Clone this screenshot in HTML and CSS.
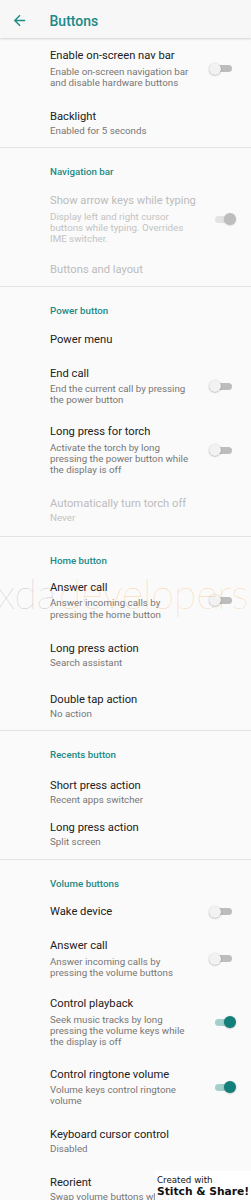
FILE: index.html
```html
<!DOCTYPE html>
<html>
<head>
<meta charset="utf-8">
<link rel="stylesheet" href="styles.css">
</head>
<body>
<div class="screen">
  <header class="bar">
    <svg class="back" viewBox="0 0 24 24"><path d="M20 11H7.83l5.59-5.59L12 4l-8 8 8 8 1.41-1.41L7.83 13H20v-2z"/></svg>
    <h1 class="bar-title">Buttons</h1>
  </header>
  <main class="list">
    <div class="pref sw pb11">
      <div class="text"><div class="title">Enable on-screen nav bar</div><div class="sum">Enable on-screen navigation bar<br>and disable hardware buttons</div></div>
      <span class="switch"><span class="track"></span><span class="thumb"></span></span>
    </div>
    <div class="pref">
      <div class="text"><div class="title">Backlight</div><div class="sum">Enabled for 5 seconds</div></div>
    </div>
    <div class="divider"></div>

    <div class="cat pb6">Navigation bar</div>
    <div class="pref sw disabled pb8">
      <div class="text"><div class="title">Show arrow keys while typing</div><div class="sum">Display left and right cursor<br>buttons while typing. Overrides<br>IME switcher.</div></div>
      <span class="switch on"><span class="track"></span><span class="thumb"></span></span>
    </div>
    <div class="pref only disabled pb10">
      <div class="text"><div class="title">Buttons and layout</div></div>
    </div>
    <div class="divider"></div>

    <div class="cat">Power button</div>
    <div class="pref only">
      <div class="text"><div class="title">Power menu</div></div>
    </div>
    <div class="pref sw pb8h">
      <div class="text"><div class="title">End call</div><div class="sum">End the current call by pressing<br>the power button</div></div>
      <span class="switch"><span class="track"></span><span class="thumb"></span></span>
    </div>
    <div class="pref sw pb11">
      <div class="text"><div class="title">Long press for torch</div><div class="sum">Activate the torch by long<br>pressing the power button while<br>the display is off</div></div>
      <span class="switch"><span class="track"></span><span class="thumb"></span></span>
    </div>
    <div class="pref disabled pb12">
      <div class="text"><div class="title">Automatically turn torch off</div><div class="sum">Never</div></div>
    </div>
    <div class="divider"></div>

    <div class="cat pb4">Home button</div>
    <div class="pref sw pb11h">
      <div class="text"><div class="title">Answer call</div><div class="sum">Answer incoming calls by<br>pressing the home button</div></div>
      <span class="switch"><span class="track"></span><span class="thumb"></span></span>
    </div>
    <div class="pref pb13h">
      <div class="text"><div class="title">Long press action</div><div class="sum">Search assistant</div></div>
    </div>
    <div class="pref">
      <div class="text"><div class="title">Double tap action</div><div class="sum">No action</div></div>
    </div>
    <div class="divider"></div>

    <div class="cat pb8">Recents button</div>
    <div class="pref pb5">
      <div class="text"><div class="title">Short press action</div><div class="sum">Recent apps switcher</div></div>
    </div>
    <div class="pref pb11h">
      <div class="text"><div class="title">Long press action</div><div class="sum">Split screen</div></div>
    </div>
    <div class="divider"></div>

    <div class="cat pb4h">Volume buttons</div>
    <div class="pref only">
      <div class="text"><div class="title">Wake device</div></div>
      <span class="switch"><span class="track"></span><span class="thumb"></span></span>
    </div>
    <div class="pref sw pb8">
      <div class="text"><div class="title">Answer call</div><div class="sum">Answer incoming calls by<br>pressing the volume buttons</div></div>
      <span class="switch"><span class="track"></span><span class="thumb"></span></span>
    </div>
    <div class="pref sw pb9">
      <div class="text"><div class="title">Control playback</div><div class="sum">Seek music tracks by long<br>pressing the volume keys while<br>the display is off</div></div>
      <span class="switch on"><span class="track"></span><span class="thumb"></span></span>
    </div>
    <div class="pref sw">
      <div class="text"><div class="title">Control ringtone volume</div><div class="sum">Volume keys control ringtone<br>volume</div></div>
      <span class="switch on"><span class="track"></span><span class="thumb"></span></span>
    </div>
    <div class="pref">
      <div class="text"><div class="title">Keyboard cursor control</div><div class="sum">Disabled</div></div>
    </div>
    <div class="pref">
      <div class="text"><div class="title">Reorient</div><div class="sum">Swap volume buttons when the<br>screen is rotated</div></div>
    </div>
  </main>

  <div class="xda"><span class="xda-x">xda</span><span class="xda-dev">developers</span></div>

  <div class="stitch">
    <div class="stitch-small">Created with</div>
    <div class="stitch-big">Stitch &amp; Share!</div>
  </div>
</div>
</body>
</html>
```
FILE: styles.css
```css
html, body {
  margin: 0;
  padding: 0;
  background: #fafafa;
}

.screen {
  position: relative;
  width: 251px;
  height: 1200px;
  overflow: hidden;
  background: #fafafa;
  font-family: Roboto, "Noto Sans", sans-serif;
}

/* ---------- toolbar ---------- */
.bar {
  position: relative;
  z-index: 2;
  display: flex;
  align-items: center;
  height: 38px;
  box-sizing: border-box;
  padding-left: 11px;
  background: #f7f7f7;
  box-shadow: 0 1px 2px rgba(0, 0, 0, 0.16);
}

.back {
  width: 17px;
  height: 17px;
  fill: #1b8a86;
  margin-top: 2px;
}

.bar-title {
  margin: 3.8px 0 0 21.5px;
  font-size: 14px;
  font-weight: 500;
  line-height: 16.4px;
  color: #1b8a86;
}

/* ---------- list ---------- */
.list {
  display: flex;
  flex-direction: column;
}

.pref {
  display: flex;
  align-items: center;
  padding: 11px 14px 10.5px 50px;
}

.pref.only {
  padding-bottom: 9.5px;
}

.text {
  flex: 1;
  min-width: 0;
  white-space: nowrap;
}

.title {
  font-size: 11.2px;
  line-height: 13px;
  color: #212121;
}

.sum {
  margin-top: 2px;
  font-size: 9.75px;
  line-height: 11.2px;
  color: #767676;
}

.pref.sw .sum {
  margin-top: 3.7px;
}

.pref.disabled .title {
  color: #bcbcbc;
}

.pref.disabled .sum {
  color: #c3c3c3;
}

.cat {
  padding: 18px 14px 5.5px 50px;
  font-size: 9.75px;
  line-height: 11.2px;
  font-weight: 500;
  color: #1b8a86;
}

.divider {
  height: 1px;
  background: #e3e3e3;
}

/* row spacing adjustments */
.pref.pb4, .cat.pb4 { padding-bottom: 4px; }
.cat.pb4h { padding-bottom: 4.5px; }
.pref.pb5 { padding-bottom: 5px; }
.cat.pb6 { padding-bottom: 6px; }
.pref.pb8, .cat.pb8 { padding-bottom: 8px; }
.pref.pb8h { padding-bottom: 8.5px; }
.pref.pb9 { padding-bottom: 9px; }
.pref.pb10 { padding-bottom: 10px; }
.pref.pb11 { padding-bottom: 11px; }
.pref.pb11h { padding-bottom: 11.5px; }
.pref.pb12 { padding-bottom: 12px; }
.pref.pb13h { padding-bottom: 13.5px; }

/* ---------- switch ---------- */
.switch {
  position: relative;
  flex: none;
  width: 29px;
  height: 14px;
}

.track {
  position: absolute;
  left: 7px;
  top: 3.5px;
  width: 17px;
  height: 7px;
  border-radius: 3.5px;
  background: #bdbdbd;
}

.thumb {
  position: absolute;
  left: 1px;
  top: 1px;
  width: 12px;
  height: 12px;
  border-radius: 50%;
  background: #f2f2f2;
  box-shadow: 0 0.5px 1.5px rgba(0, 0, 0, 0.35);
}

.switch.on .track {
  background: #a3cfcc;
}

.switch.on .thumb {
  left: 16px;
  background: #137f7a;
}

.pref.disabled .switch.on .track {
  background: #e3e3e3;
}

.pref.disabled .switch.on .thumb {
  background: #bdbdbd;
  box-shadow: 0 0.5px 1.5px rgba(0, 0, 0, 0.2);
}

/* ---------- watermarks ---------- */
.xda {
  position: absolute;
  left: -3px;
  top: 573px;
  white-space: nowrap;
  font-family: Lato, "Open Sans", sans-serif;
  font-weight: 100;
  font-size: 41px;
  line-height: 41px;
  pointer-events: none;
}

.xda-x {
  color: rgba(150, 150, 150, 0.5);
}

.xda-dev {
  color: rgba(250, 165, 70, 0.5);
  margin-left: 3px;
}

.stitch {
  position: absolute;
  left: 155px;
  top: 1171px;
  right: 0;
  bottom: 0;
  padding-left: 2px;
  background: rgba(255, 255, 255, 0.88);
  font-family: "DejaVu Sans", sans-serif;
  color: #111;
  white-space: nowrap;
}

.stitch-small {
  font-size: 8.7px;
  line-height: 10px;
  margin-top: 4px;
}

.stitch-big {
  font-size: 10.7px;
  font-weight: bold;
  line-height: 13px;
}
```
